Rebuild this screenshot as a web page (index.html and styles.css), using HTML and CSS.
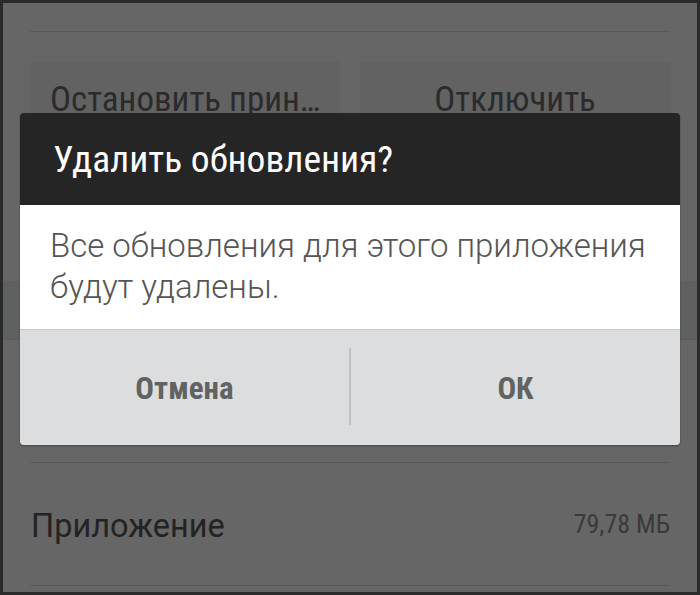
FILE: index.html
```html
<!DOCTYPE html>
<html lang="ru">
<head>
<meta charset="utf-8">
<title>Удалить обновления?</title>
<link rel="stylesheet" href="styles.css">
</head>
<body>
<div class="screen">
  <div class="page">
    <div class="pad">
      <div class="top-space"></div>
      <div class="divider"></div>
      <div class="actions">
        <div class="action action-left"><span class="action-label">Остановить прин…</span></div>
        <div class="action"><span class="action-label">Отключить</span></div>
      </div>
    </div>
    <div class="band"></div>
    <div class="pad">
      <div class="gap"></div>
      <div class="divider"></div>
      <div class="row">
        <span class="row-label">Приложение</span>
        <span class="row-value">79,78 МБ</span>
      </div>
      <div class="divider"></div>
    </div>
  </div>

  <div class="dialog">
    <div class="dialog-title">Удалить обновления?</div>
    <div class="dialog-body">Все обновления для этого приложения будут удалены.</div>
    <div class="dialog-buttons">
      <div class="dialog-btn">Отмена</div>
      <div class="btn-sep"></div>
      <div class="dialog-btn">ОК</div>
    </div>
  </div>
</div>
</body>
</html>
```
FILE: styles.css
```css
html, body {
  margin: 0;
  padding: 0;
  background: #2a2a2a;
}
body {
  width: 700px;
  height: 595px;
  overflow: hidden;
  font-family: Roboto, "Noto Sans", "DejaVu Sans", sans-serif;
}
.screen {
  position: relative;
  margin: 3px;
  width: 694px;
  height: 589px;
  background: #666666;
  overflow: hidden;
}
.page {
  display: flex;
  flex-direction: column;
}
.pad {
  padding: 0 27px;
}
.top-space {
  height: 28px;
}
.gap {
  height: 122px;
}
.divider {
  height: 1px;
  background: #595959;
}
.actions {
  margin-top: 30px;
  display: grid;
  grid-template-columns: 1fr 1fr;
  gap: 20px;
  height: 90px;
}
.action {
  background: #626262;
  padding: 0 10px;
  display: flex;
  align-items: flex-start;
  justify-content: center;
  min-width: 0;
}
.action-left {
  justify-content: flex-start;
  padding-left: 20px;
}
.action-label {
  display: block;
  font-family: "Roboto Condensed", Roboto, sans-serif;
  font-stretch: condensed;
  font-size: 35px;
  line-height: 44px;
  margin-top: 16px;
  color: #2b2b2b;
  white-space: nowrap;
}
.band {
  margin-top: 129px;
  height: 58px;
  background: #5f6160;
  border-bottom: 1px solid #5a5b5b;
}
.row {
  height: 122px;
  display: flex;
  align-items: center;
  justify-content: space-between;
}
.row-label {
  font-size: 32.5px;
  color: #232323;
  margin-left: 1px;
  margin-top: 4px;
}
.row-value {
  font-family: "Roboto Condensed", Roboto, sans-serif;
  font-size: 26px;
  color: #3a3a3a;
}

.dialog {
  position: absolute;
  left: 17px;
  top: 110px;
  width: 660px;
  border-radius: 4px;
  overflow: hidden;
  box-shadow: 0 1px 2px rgba(0,0,0,0.35);
}
.dialog-title {
  height: 92px;
  background: #252525;
  color: #ffffff;
  display: flex;
  align-items: center;
  padding-left: 33px;
  font-family: "Roboto Condensed", Roboto, sans-serif;
  font-stretch: condensed;
  font-size: 37.5px;
}
.dialog-body {
  background: #ffffff;
  padding: 20px 30px 22px 30px;
  font-size: 33px;
  line-height: 41px;
  font-weight: 300;
  color: #555555;
  border-bottom: 1px solid #c9c9c9;
}
.dialog-buttons {
  background: #dcdddf;
  height: 115px;
  display: flex;
  align-items: stretch;
}
.dialog-btn {
  flex: 1;
  display: flex;
  align-items: center;
  justify-content: center;
  font-family: "Roboto Condensed", Roboto, sans-serif;
  font-stretch: condensed;
  font-weight: 700;
  font-size: 31px;
  color: #626262;
  padding-top: 2px;
}
.btn-sep {
  width: 2px;
  margin: 18px 0 20px;
  background: #c0c0c0;
}
```
